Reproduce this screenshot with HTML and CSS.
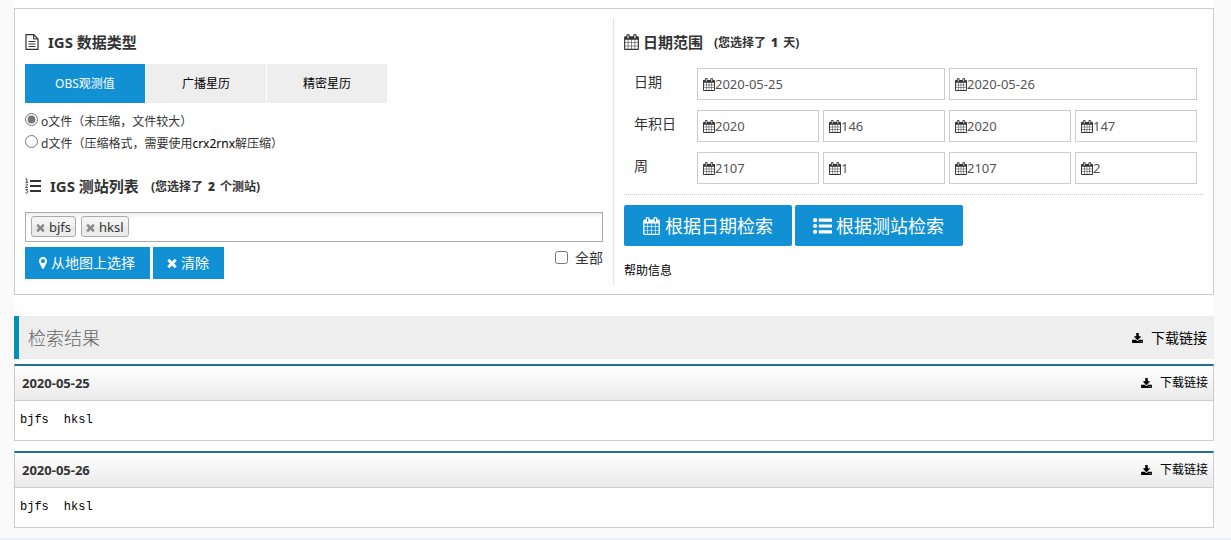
FILE: index.html
```html
<!DOCTYPE html>
<html lang="zh-CN">
<head>
<meta charset="utf-8">
<meta name="viewport" content="width=device-width, initial-scale=1">
<title>IGS 数据检索</title>
<link rel="stylesheet" href="styles.css">
</head>
<body>
<svg class="sprite" aria-hidden="true">
  <symbol id="calendar" viewBox="64 0 1664 1792"><path d="M192 1664h288v-288h-288v288zm352 0h320v-288h-320v288zm-352-352h288v-320h-288v320zm352 0h320v-320h-320v320zm-352-384h288v-288h-288v288zm736 736h320v-288h-320v288zm-384-736h320v-288h-320v288zm768 736h288v-288h-288v288zm-384-352h320v-320h-320v320zm-352-864v-288q0-13-9.500-22.500t-22.500-9.500h-64q-13 0-22.500 9.500t-9.500 22.500v288q0 13 9.500 22.500t22.500 9.500h64q13 0 22.500-9.500t9.500-22.500zm736 864h288v-320h-288v320zm-384-384h320v-288h-320v288zm384 0h288v-288h-288v288zm32-480v-288q0-13-9.500-22.500t-22.500-9.500h-64q-13 0-22.500 9.500t-9.500 22.500v288q0 13 9.500 22.500t22.500 9.500h64q13 0 22.500-9.500t9.500-22.500zm384-64v1280q0 52-38 90t-90 38h-1408q-52 0-90-38t-38-90v-1280q0-52 38-90t90-38h128v-96q0-66 47-113t113-47h64q66 0 113 47t47 113v96h384v-96q0-66 47-113t113-47h64q66 0 113 47t47 113v96h128q52 0 90 38t38 90z"/></symbol>
  <symbol id="marker" viewBox="384 128 1024 1536"><path d="M1152 640q0-106-75-181t-181-75-181 75-75 181 75 181 181 75 181-75 75-181zm256 0q0 109-33 179l-364 774q-16 33-47.500 52t-67.500 19-67.500-19-46.500-52l-365-774q-33-70-33-179 0-212 150-362t362-150 362 150 150 362z"/></symbol>
  <symbol id="times" viewBox="302 366 1188 1188"><path d="M1490 1322q0 40-28 68l-136 136q-28 28-68 28t-68-28l-294-294-294 294q-28 28-68 28t-68-28l-136-136q-28-28-28-68t28-68l294-294-294-294q-28-28-28-68t28-68l136-136q28-28 68-28t68 28l294 294 294-294q28-28 68-28t68 28l136 136q28 28 28 68t-28 68l-294 294 294 294q28 28 28 68z"/></symbol>
  <symbol id="download" viewBox="64 0 1664 1536"><path d="M1344 1344q0-26-19-45t-45-19-45 19-19 45 19 45 45 19 45-19 19-45zm256 0q0-26-19-45t-45-19-45 19-19 45 19 45 45 19 45-19 19-45zm128-224v320q0 40-28 68t-68 28h-1472q-40 0-68-28t-28-68v-320q0-40 28-68t68-28h465l135 136q58 56 136 56t136-56l136-136h464q40 0 68 28t28 68zm-325-569q17 41-14 70l-448 448q-18 19-45 19t-45-19l-448-448q-31-29-14-70 17-39 59-39h256v-448q0-26 19-45t45-19h256q26 0 45 19t19 45v448h256q42 0 59 39z"/></symbol>
  <symbol id="file" viewBox="0 0 14 16"><path d="M1 .7h7.800L13 5v10.300H1zM8.700 .7V5H13M3.500 7.500h7M3.500 10h7M3.500 12.500h7" fill="none" stroke="currentColor" stroke-width="1.200"/></symbol>
  <symbol id="list-ul" viewBox="0 0 18 16"><circle cx="2" cy="2.500" r="2"/><circle cx="2" cy="8" r="2"/><circle cx="2" cy="13.500" r="2"/><path d="M5.500 1H18v3H5.500zM5.500 6.500H18v3H5.500zM5.500 12H18v3H5.500z"/></symbol>
  <symbol id="list-ol" viewBox="0 0 16 16"><path d="M5 2h11v2H5zM5 7h11v2H5zM5 12h11v2H5z"/><path d="M.6 1.400L1.900 .5v3.800M.5 4.300h2.600M.6 6.600c.5-.8 2-.7 2 .2 0 .9-2 1.500-2 2.600h2.300M.6 11.400h2.100l-1.100 1.400c1.700-.1 1.700 2.300-.1 2.300-.5 0-.8-.1-1.100-.4" fill="none" stroke="currentColor" stroke-width=".9"/></symbol>
</svg>

<main class="page">
  <section class="panel">
    <form class="column stations">
      <h2 class="heading heading-wide"><svg class="icon icon-file"><use href="#file"/></svg>IGS 数据类型</h2>
      <div class="tabs">
        <button type="button" class="tab active">OBS观测值</button>
        <button type="button" class="tab">广播星历</button>
        <button type="button" class="tab">精密星历</button>
      </div>
      <div class="formats">
        <label class="format"><input type="radio" name="format" checked><span>o文件（未压缩，文件较大）</span></label>
        <label class="format"><input type="radio" name="format"><span>d文件（压缩格式，需要使用<a href="#crx2rnx">crx2rnx</a>解压缩）</span></label>
      </div>
      <h2 class="heading heading-wide"><svg class="icon icon-ol"><use href="#list-ol"/></svg>IGS 测站列表<span class="note">(您选择了<b>2</b>个测站)</span></h2>
      <div class="chosen">
        <span class="chip"><button type="button" aria-label="移除 bjfs"><svg class="icon"><use href="#times"/></svg></button>bjfs</span>
        <span class="chip"><button type="button" aria-label="移除 hksl"><svg class="icon"><use href="#times"/></svg></button>hksl</span>
        <input type="text" aria-label="测站">
      </div>
      <div class="actions">
        <button type="button" class="button"><svg class="icon icon-marker"><use href="#marker"/></svg>从地图上选择</button>
        <button type="button" class="button"><svg class="icon icon-times"><use href="#times"/></svg>清除</button>
        <label class="all"><input type="checkbox">全部</label>
      </div>
    </form>

    <form class="column dates">
      <h2 class="heading"><svg class="icon icon-calendar"><use href="#calendar"/></svg>日期范围<span class="note">(您选择了<b>1</b>天)</span></h2>
      <div class="fields">
        <div class="row">
          <span class="name">日期</span>
          <label class="field"><svg class="icon"><use href="#calendar"/></svg><input type="text" aria-label="开始日期" value="2020-05-25"></label>
          <label class="field"><svg class="icon"><use href="#calendar"/></svg><input type="text" aria-label="结束日期" value="2020-05-26"></label>
        </div>
        <div class="row">
          <span class="name">年积日</span>
          <label class="field"><svg class="icon"><use href="#calendar"/></svg><input type="text" aria-label="开始年" value="2020"></label>
          <label class="field"><svg class="icon"><use href="#calendar"/></svg><input type="text" aria-label="开始年积日" value="146"></label>
          <label class="field"><svg class="icon"><use href="#calendar"/></svg><input type="text" aria-label="结束年" value="2020"></label>
          <label class="field"><svg class="icon"><use href="#calendar"/></svg><input type="text" aria-label="结束年积日" value="147"></label>
        </div>
        <div class="row">
          <span class="name">周</span>
          <label class="field"><svg class="icon"><use href="#calendar"/></svg><input type="text" aria-label="开始周" value="2107"></label>
          <label class="field"><svg class="icon"><use href="#calendar"/></svg><input type="text" aria-label="开始周内天" value="1"></label>
          <label class="field"><svg class="icon"><use href="#calendar"/></svg><input type="text" aria-label="结束周" value="2107"></label>
          <label class="field"><svg class="icon"><use href="#calendar"/></svg><input type="text" aria-label="结束周内天" value="2"></label>
        </div>
      </div>
      <div class="search">
        <button type="button" class="button large"><svg class="icon"><use href="#calendar"/></svg>根据日期检索</button>
        <button type="button" class="button large"><svg class="icon"><use href="#list-ul"/></svg>根据测站检索</button>
      </div>
      <a class="help" href="#help">帮助信息</a>
    </form>
  </section>

  <header class="results-head">
    <h1>检索结果</h1>
    <a class="download" href="#all"><svg class="icon"><use href="#download"/></svg>下载链接</a>
  </header>
  <section class="result">
    <header><h3>2020-05-25</h3><a class="download" href="#d25"><svg class="icon"><use href="#download"/></svg>下载链接</a></header>
    <div class="files"><a href="#bjfs25">bjfs</a><a href="#hksl25">hksl</a></div>
  </section>
  <section class="result">
    <header><h3>2020-05-26</h3><a class="download" href="#d26"><svg class="icon"><use href="#download"/></svg>下载链接</a></header>
    <div class="files"><a href="#bjfs26">bjfs</a><a href="#hksl26">hksl</a></div>
  </section>
</main>
<footer class="footer"></footer>
</body>
</html>
```
FILE: styles.css
```css
* { box-sizing: border-box; }
body {
  margin: 0;
  min-height: 100vh;
  display: flex;
  flex-direction: column;
  background: #fafafa;
  color: #333;
  font: 12px/20px "Noto Sans", "Noto Sans CJK SC", sans-serif;
}
h1, h2, h3 { margin: 0; }
button, input { font: inherit; color: inherit; }
input[type="radio"], input[type="checkbox"] { width: 13px; height: 13px; margin: 0; accent-color: #767676; }
button { border: 0; padding: 0; cursor: pointer; }
a { color: #000; text-decoration: none; }
.sprite { display: none; }
.icon { display: block; flex: none; fill: currentColor; }

.page {
  margin: 0 17px 10px 14px;
  padding-top: 8px;
  background: #fff;
}
.panel {
  display: grid;
  grid-template-columns: 1fr 1fr;
  padding: 10px;
  border: 1px solid #ccc;
}
.column { min-width: 0; min-height: 265px; }
.stations { padding-right: 10px; border-right: 1px dotted #ccc; }
.dates { padding-left: 10px; }

.heading {
  display: flex;
  align-items: center;
  gap: 4px;
  height: 20px;
  font-size: 15px;
  line-height: 20px;
  font-weight: 700;
}
.column > .heading:first-child { margin-top: 13px; }
.heading-wide { gap: 9px; }
.icon-file { width: 14px; height: 16px; }
.icon-ol { width: 16px; height: 16px; }
.icon-calendar { width: 15px; height: 16px; }
.note { margin-left: 7px; font-size: 12px; line-height: 20px; padding-top: 2px; }
.heading-wide .note { margin-left: 3px; }
.note b { margin: 0 5px; }

.tabs { display: flex; gap: 1px; margin-top: 12px; }
.tab { width: 120px; height: 39px; background: #eee; color: #000; }
.tab.active { background: #1190d4; color: #fff; }
.formats { margin: 7px 0 22px; }
.format { display: flex; gap: 3px; height: 22px; }
.format input { margin-top: 3px; }
.format span { line-height: 24px; }

.chosen {
  display: flex;
  gap: 5px;
  height: 30px;
  margin-top: 16px;
  padding: 3px 5px;
  border: 1px solid #aaa;
  background: linear-gradient(#eee 0, #fff 5px);
}
.chosen > input { flex: 1; min-width: 0; border: 0; outline: 0; background: none; }
.chip {
  display: flex;
  align-items: center;
  gap: 4px;
  height: 21px;
  padding: 0 4px;
  border: 1px solid #aaa;
  border-radius: 3px;
  background: linear-gradient(#f4f4f4 20%, #f0f0f0 50%, #e8e8e8 52%, #eee);
  font-size: 13px;
}
.chip button { background: none; color: #888; margin-top: 2px; }
.chip .icon { width: 9px; height: 8px; }

.actions { display: flex; gap: 3px; margin-top: 5px; }
.button {
  display: flex;
  align-items: center;
  gap: 4px;
  height: 32px;
  padding: 0 15px 0 14px;
  background: #1190d4;
  color: #fff;
  font-size: 14px;
}
.icon-marker { width: 8px; height: 12px; }
.icon-times { width: 10px; height: 9px; }
.all {
  display: flex;
  align-items: center;
  gap: 7px;
  height: 21px;
  margin-left: auto;
  font-size: 14px;
}

.fields {
  display: grid;
  grid-template-columns: minmax(0, 1fr);
  gap: 10px;
  margin-top: 16px;
  padding: 0 6px 10px 10px;
  border-bottom: 1px dotted #ccc;
}
.row { display: flex; gap: 4px; }
.name { flex: none; width: 59px; font-size: 14px; line-height: 28px; }
.field {
  display: flex;
  flex: 1;
  align-items: center;
  min-width: 0;
  height: 32px;
  padding: 0 5px;
  border: 1px solid #ccc;
  color: #555;
}
.field .icon { width: 12px; height: 13px; color: #333; }
.field input {
  flex: 1;
  width: 100%;
  min-width: 0;
  padding: 0;
  border: 0;
  outline: 0;
  background: none;
  font-size: 13px;
}
.search { display: flex; gap: 3px; margin-top: 10px; }
.large { height: 41px; padding: 0 19px 0 18px; border-radius: 2px; font-size: 18px; }
.large .icon { width: 19px; height: 18px; }
.help { display: inline-block; margin-top: 15px; }

.results-head {
  display: flex;
  align-items: center;
  justify-content: space-between;
  height: 43px;
  margin: 21px 0 5px;
  padding: 0 7px 0 9px;
  border-left: 5px solid #0090b8;
  background: #eee;
}
.results-head h1 { color: #666; font-size: 18px; font-weight: 300; }
.download { display: flex; align-items: center; gap: 8px; }
.download .icon { width: 11px; height: 10px; }
.results-head .download { font-size: 14px; }
.result { border: 1px solid #ccc; border-top: 2px solid #1f6f9a; }
.result + .result { margin-top: 10px; }
.result header {
  display: flex;
  align-items: center;
  justify-content: space-between;
  height: 35px;
  padding: 0 5px 0 7px;
  border-bottom: 1px solid #ccc;
  background: linear-gradient(#fff, #eaeaea);
}
.result h3 { font-size: 13px; }
.files {
  display: flex;
  gap: 15px;
  height: 39px;
  padding: 9px 5px;
  font-family: "Liberation Mono", monospace;
}
.footer { flex: 1; background: #eeeff4; }
```
